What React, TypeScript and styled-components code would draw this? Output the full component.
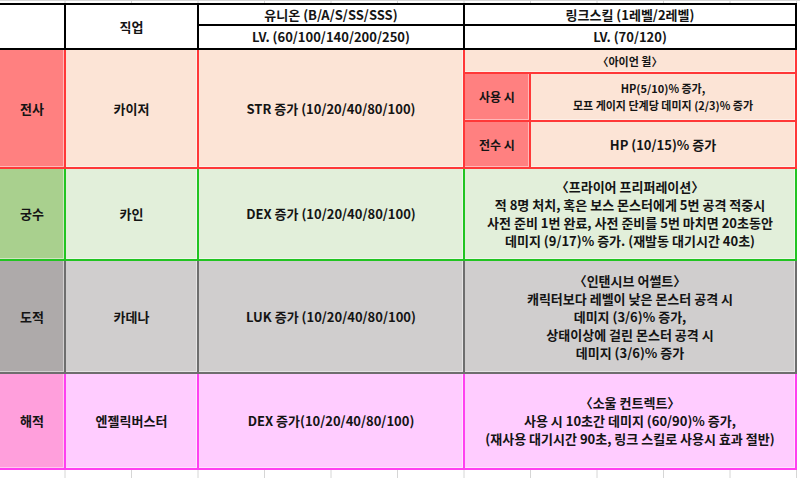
import React from 'react'
import styled, { createGlobalStyle } from 'styled-components'

type Theme = {
  head: string
  fill: string
  line: string
}

const red: Theme = { head: '#ff8080', fill: '#fce4d6', line: '#ff3838' }
const green: Theme = { head: '#a9d08e', fill: '#e2efda', line: '#22c422' }
const gray: Theme = { head: '#aeaaaa', fill: '#d0cece', line: '#6e6e6e' }
const pink: Theme = { head: '#ff9fdc', fill: '#ffccff', line: '#ff40f0' }

const GlobalStyle = createGlobalStyle`
  html, body {
    margin: 0;
    padding: 0;
  }
  body {
    width: 800px;
    height: 478px;
    overflow: hidden;
    background-color: #fff;
    background-image:
      linear-gradient(#d6d6d6, #d6d6d6),
      linear-gradient(to right, transparent 65px, #d6d6d6 65px, #d6d6d6 66px, transparent 66px);
    background-size: 100% 1px, 66.5px 100%;
    background-repeat: no-repeat, repeat-x;
    font-family: 'Noto Sans CJK KR', 'Noto Sans', sans-serif;
    color: #141414;
  }
`

const Sheet = styled.main`
  padding-top: 3px;
`

const Table = styled.div`
  width: 797px;
  display: grid;
  grid-template-columns: 66px 133px 266px 332px;
  grid-template-rows: 21px 24px 119px 92px 113px 96px;
  border-top: 2px solid #000;
`

type CellProps = {
  $bg: string
  $line: string
  $span?: number
  $size?: number
  $lh?: number
}

const Cell = styled.div<CellProps>`
  box-sizing: border-box;
  display: flex;
  flex-direction: column;
  align-items: center;
  justify-content: center;
  text-align: center;
  grid-row: span ${p => p.$span ?? 1};
  background: ${p => p.$bg};
  border-right: 2px solid ${p => p.$line};
  border-bottom: 2px solid ${p => p.$line};
  box-shadow: inset -1px -1px 0 rgba(255, 255, 255, 0.45);
  font-size: ${p => p.$size ?? 13}px;
  font-weight: 700;
  line-height: ${p => p.$lh ?? 18}px;
  white-space: nowrap;
`

const Split = styled.div<{ $line: string }>`
  box-sizing: border-box;
  display: grid;
  grid-template-columns: 66px 1fr;
  grid-template-rows: 24px 48px 1fr;
  border-right: 2px solid ${p => p.$line};
  border-bottom: 2px solid ${p => p.$line};
`

const SubCell = styled(Cell)<{ $wide?: boolean; $label?: boolean; $last?: boolean }>`
  grid-column: ${p => (p.$wide ? 'span 2' : 'auto')};
  border-right-width: ${p => (p.$label ? 2 : 0)}px;
  border-bottom-width: ${p => (p.$last ? 0 : 2)}px;
`

const Line = styled.span`
  display: block;
`

type Row = {
  cat: string
  job: string
  union: string
  theme: Theme
  link: string[]
}

const rows: Row[] = [
  {
    cat: '궁수',
    job: '카인',
    union: 'DEX 증가 (10/20/40/80/100)',
    theme: green,
    link: [
      '〈프라이어 프리퍼레이션〉',
      '적 8명 처치, 혹은 보스 몬스터에게 5번 공격 적중시',
      '사전 준비 1번 완료, 사전 준비를 5번 마치면 20초동안',
      '데미지 (9/17)% 증가. (재발동 대기시간 40초)',
    ],
  },
  {
    cat: '도적',
    job: '카데나',
    union: 'LUK 증가 (10/20/40/80/100)',
    theme: gray,
    link: [
      '〈인탠시브 어썰트〉',
      '캐릭터보다 레벨이 낮은 몬스터 공격 시',
      '데미지 (3/6)% 증가,',
      '상태이상에 걸린 몬스터 공격 시',
      '데미지 (3/6)% 증가',
    ],
  },
  {
    cat: '해적',
    job: '엔젤릭버스터',
    union: 'DEX 증가(10/20/40/80/100)',
    theme: pink,
    link: [
      '〈소울 컨트렉트〉',
      '사용 시 10초간 데미지 (60/90)% 증가,',
      '(재사용 대기시간 90초, 링크 스킬로 사용시 효과 절반)',
    ],
  },
]

const App: React.FC = () => {
  const head = { $bg: '#fff', $line: '#000' }

  return (
    <Sheet>
      <GlobalStyle />
      <Table>
        <Cell {...head} $span={2} />
        <Cell {...head} $span={2}>직업</Cell>
        <Cell {...head}>유니온 (B/A/S/SS/SSS)</Cell>
        <Cell {...head}>링크스킬 (1레벨/2레벨)</Cell>
        <Cell {...head}>LV. (60/100/140/200/250)</Cell>
        <Cell {...head}>LV. (70/120)</Cell>

        <Cell $bg={red.head} $line={red.line}>전사</Cell>
        <Cell $bg={red.fill} $line={red.line}>카이저</Cell>
        <Cell $bg={red.fill} $line={red.line}>STR 증가 (10/20/40/80/100)</Cell>
        <Split $line={red.line}>
          <SubCell $bg={red.fill} $line={red.line} $size={11} $wide>
            〈아이언 윌〉
          </SubCell>
          <SubCell $bg={red.head} $line={red.line} $size={12} $label>사용 시</SubCell>
          <SubCell $bg={red.fill} $line={red.line} $size={11} $lh={17}>
            <Line>HP(5/10)% 증가,</Line>
            <Line>모프 게이지 단계당 데미지 (2/3)% 증가</Line>
          </SubCell>
          <SubCell $bg={red.head} $line={red.line} $size={12} $label $last>전수 시</SubCell>
          <SubCell $bg={red.fill} $line={red.line} $last>HP (10/15)% 증가</SubCell>
        </Split>

        {rows.map(r => (
          <React.Fragment key={r.cat}>
            <Cell $bg={r.theme.head} $line={r.theme.line}>{r.cat}</Cell>
            <Cell $bg={r.theme.fill} $line={r.theme.line}>{r.job}</Cell>
            <Cell $bg={r.theme.fill} $line={r.theme.line}>{r.union}</Cell>
            <Cell $bg={r.theme.fill} $line={r.theme.line}>
              {r.link.map(l => (
                <Line key={l}>{l}</Line>
              ))}
            </Cell>
          </React.Fragment>
        ))}
      </Table>
    </Sheet>
  )
}

export default App
